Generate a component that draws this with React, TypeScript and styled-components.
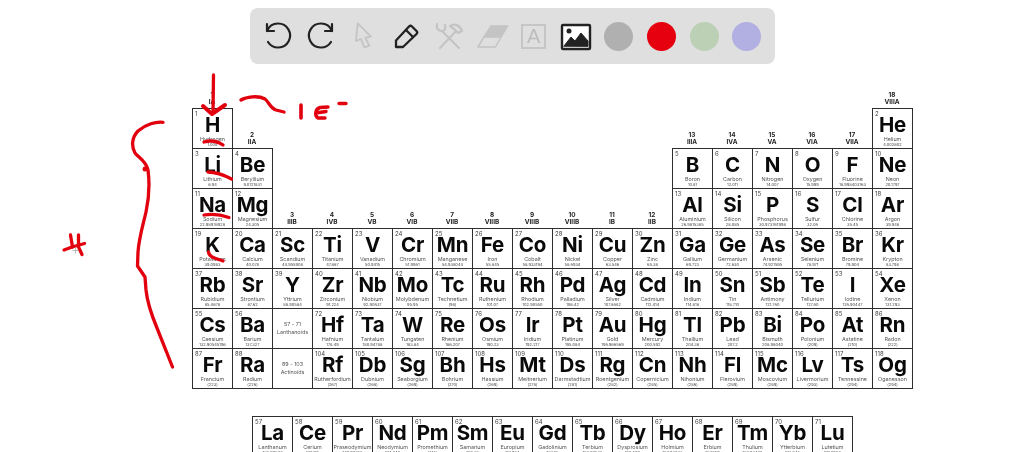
import React from "react";
import styled, { createGlobalStyle } from "styled-components";

const Global = createGlobalStyle`
  html, body { margin: 0; padding: 0; background: #fff; overflow: hidden; }
  body { font-family: Inter, "Liberation Sans", sans-serif; }
`;

const Page = styled.div`
  position: relative;
  width: 1024px;
  height: 452px;
  overflow: hidden;
  padding-top: 8px;
  box-sizing: border-box;
  background: #fff;
  filter: blur(0.35px);
`;

const Toolbar = styled.div`
  display: flex;
  align-items: center;
  width: 525px;
  height: 56px;
  margin-left: 250px;
  padding: 0 7px;
  box-sizing: border-box;
  background: #dfdfdf;
  border-radius: 8px;
`;

const Tool = styled.div`
  flex: 1;
  display: flex;
  align-items: center;
  justify-content: center;
`;

const Icon = styled.svg`
  width: 32px;
  height: 32px;
  overflow: visible;
  fill: none;
  stroke-linecap: round;
  stroke-linejoin: round;
`;

const TextTool = styled.div`
  width: 25px;
  height: 25px;
  box-sizing: border-box;
  display: flex;
  align-items: center;
  justify-content: center;
  border: 2px solid #c6c6c6;
  color: #bdbdbd;
  font-family: "Liberation Sans", sans-serif;
  font-size: 20px;
  line-height: 1;
`;

const Swatch = styled.div<{ $color: string }>`
  width: 29px;
  height: 29px;
  border-radius: 50%;
  background: ${(p) => p.$color};
`;

const Table = styled.div`
  display: grid;
  grid-template-columns: repeat(18, 40px);
  grid-template-rows: 20px repeat(7, 40px);
  margin: 24px 0 0 192px;
  width: 720px;
`;

const Series = styled.div`
  display: grid;
  grid-template-columns: repeat(15, 40px);
  grid-template-rows: 40px;
  margin: 28px 0 0 252px;
  width: 600px;
`;

const Cell = styled.div<{ $col: number; $row: number }>`
  grid-column: ${(p) => p.$col};
  grid-row: ${(p) => p.$row};
  width: 41px;
  height: 41px;
  margin: 0 -1px -1px 0;
  box-sizing: border-box;
  border: 1px solid #2e2e2e;
  padding-top: 1px;
  display: flex;
  flex-direction: column;
  align-items: center;
  background: #fff;
  overflow: hidden;
`;

const Num = styled.div`
  align-self: flex-start;
  height: 5px;
  padding-left: 2px;
  font-size: 6px;
  line-height: 7px;
  color: #444;
`;

const Symbol = styled.div`
  height: 20px;
  font-size: 20.5px;
  font-weight: 700;
  letter-spacing: -0.2px;
  line-height: 20px;
  color: #0a0a0a;
`;

const Name = styled.div`
  margin-top: 1px;
  height: 6px;
  font-size: 5.4px;
  line-height: 6px;
  color: #555;
  white-space: nowrap;
`;

const Mass = styled.div`
  height: 5px;
  font-size: 4px;
  line-height: 5px;
  color: #444;
  white-space: nowrap;
`;

const Range = styled.div`
  margin-top: 11px;
  font-size: 5.4px;
  line-height: 7.5px;
  color: #555;
  text-align: center;
`;

const GroupLabel = styled.div<{ $col: number; $row: number }>`
  grid-column: ${(p) => p.$col};
  grid-row: ${(p) => p.$row};
  align-self: end;
  padding-bottom: 2px;
  text-align: center;
  font-size: 6.4px;
  font-weight: 700;
  line-height: 7px;
  color: #222;
`;

const Ink = styled.svg`
  position: absolute;
  left: 0;
  top: 0;
  width: 1024px;
  height: 452px;
  fill: none;
  stroke: #e2000f;
  stroke-width: 3.3;
  stroke-linecap: round;
  stroke-linejoin: round;
  pointer-events: none;
`;

type El = [number, string, string, string, number, number];

const raw = `1 H Hydrogen 1.008 1 1|2 He Helium 4.002602 18 1|3 Li Lithium 6.94 1 2|4 Be Beryllium 9.0121831 2 2|5 B Boron 10.81 13 2|6 C Carbon 12.011 14 2|7 N Nitrogen 14.007 15 2|8 O Oxygen 15.999 16 2|9 F Fluorine 18.998403163 17 2|10 Ne Neon 20.1797 18 2|11 Na Sodium 22.98976928 1 3|12 Mg Magnesium 24.305 2 3|13 Al Aluminium 26.9815385 13 3|14 Si Silicon 28.085 14 3|15 P Phosphorus 30.973761998 15 3|16 S Sulfur 32.06 16 3|17 Cl Chlorine 35.45 17 3|18 Ar Argon 39.948 18 3|19 K Potassium 39.0983 1 4|20 Ca Calcium 40.078 2 4|21 Sc Scandium 44.955908 3 4|22 Ti Titanium 47.867 4 4|23 V Vanadium 50.9415 5 4|24 Cr Chromium 51.9961 6 4|25 Mn Manganese 54.938044 7 4|26 Fe Iron 55.845 8 4|27 Co Cobalt 58.933194 9 4|28 Ni Nickel 58.6934 10 4|29 Cu Copper 63.546 11 4|30 Zn Zinc 65.38 12 4|31 Ga Gallium 69.723 13 4|32 Ge Germanium 72.630 14 4|33 As Arsenic 74.921595 15 4|34 Se Selenium 78.971 16 4|35 Br Bromine 79.904 17 4|36 Kr Krypton 83.798 18 4|37 Rb Rubidium 85.4678 1 5|38 Sr Strontium 87.62 2 5|39 Y Yttrium 88.90584 3 5|40 Zr Zirconium 91.224 4 5|41 Nb Niobium 92.90637 5 5|42 Mo Molybdenum 95.95 6 5|43 Tc Technetium (98) 7 5|44 Ru Ruthenium 101.07 8 5|45 Rh Rhodium 102.90550 9 5|46 Pd Palladium 106.42 10 5|47 Ag Silver 107.8682 11 5|48 Cd Cadmium 112.414 12 5|49 In Indium 114.818 13 5|50 Sn Tin 118.710 14 5|51 Sb Antimony 121.760 15 5|52 Te Tellurium 127.60 16 5|53 I Iodine 126.90447 17 5|54 Xe Xenon 131.293 18 5|55 Cs Caesium 132.90545196 1 6|56 Ba Barium 137.327 2 6|72 Hf Hafnium 178.49 4 6|73 Ta Tantalum 180.94788 5 6|74 W Tungsten 183.84 6 6|75 Re Rhenium 186.207 7 6|76 Os Osmium 190.23 8 6|77 Ir Iridium 192.217 9 6|78 Pt Platinum 195.084 10 6|79 Au Gold 196.966569 11 6|80 Hg Mercury 200.592 12 6|81 Tl Thallium 204.38 13 6|82 Pb Lead 207.2 14 6|83 Bi Bismuth 208.98040 15 6|84 Po Polonium (209) 16 6|85 At Astatine (210) 17 6|86 Rn Radon (222) 18 6|87 Fr Francium (223) 1 7|88 Ra Radium (226) 2 7|104 Rf Rutherfordium (267) 4 7|105 Db Dubnium (268) 5 7|106 Sg Seaborgium (269) 6 7|107 Bh Bohrium (270) 7 7|108 Hs Hassium (269) 8 7|109 Mt Meitnerium (278) 9 7|110 Ds Darmstadtium (281) 10 7|111 Rg Roentgenium (282) 11 7|112 Cn Copernicium (285) 12 7|113 Nh Nihonium (286) 13 7|114 Fl Flerovium (289) 14 7|115 Mc Moscovium (289) 15 7|116 Lv Livermorium (293) 16 7|117 Ts Tennessine (294) 17 7|118 Og Oganesson (294) 18 7`;

const elements: El[] = raw.split("|").map((s) => {
  const [n, sym, name, mass, col, per] = s.split(" ");
  return [Number(n), sym, name, mass, Number(col), Number(per)];
});

const lanthanides: [number, string, string, string][] = [
  [57, "La", "Lanthanum", "138.90547"],
  [58, "Ce", "Cerium", "140.116"],
  [59, "Pr", "Praseodymium", "140.90766"],
  [60, "Nd", "Neodymium", "144.242"],
  [61, "Pm", "Promethium", "(145)"],
  [62, "Sm", "Samarium", "150.36"],
  [63, "Eu", "Europium", "151.964"],
  [64, "Gd", "Gadolinium", "157.25"],
  [65, "Tb", "Terbium", "158.92535"],
  [66, "Dy", "Dysprosium", "162.500"],
  [67, "Ho", "Holmium", "164.93033"],
  [68, "Er", "Erbium", "167.259"],
  [69, "Tm", "Thulium", "168.93422"],
  [70, "Yb", "Ytterbium", "173.045"],
  [71, "Lu", "Lutetium", "174.9668"],
];

const groups: [number, string, number][] = [
  [1, "IA", 1], [2, "IIA", 2], [3, "IIIB", 4], [4, "IVB", 4], [5, "VB", 4], [6, "VIB", 4],
  [7, "VIIB", 4], [8, "VIIIB", 4], [9, "VIIIB", 4], [10, "VIIIB", 4], [11, "IB", 4], [12, "IIB", 4],
  [13, "IIIA", 2], [14, "IVA", 2], [15, "VA", 2], [16, "VIA", 2], [17, "VIIA", 2], [18, "VIIIA", 1],
];

const Element = ({ n, sym, name, mass, col, row }: { n: number; sym: string; name: string; mass: string; col: number; row: number }) => (
  <Cell $col={col} $row={row}>
    <Num>{n}</Num>
    <Symbol>{sym}</Symbol>
    <Name>{name}</Name>
    <Mass>{mass}</Mass>
  </Cell>
);

const dark = "#222";
const faint = "#c4c4c4";

export default function App() {
  return (
    <Page>
      <Global />
      <Toolbar>
        <Tool>
          <Icon viewBox="0 0 32 32" stroke={dark} strokeWidth="2.2">
            <path d="M5 11C7 6 11 3.5 16 3.5A12 12 0 1 1 6 22" />
            <path d="M5 4V11H12" />
          </Icon>
        </Tool>
        <Tool>
          <Icon viewBox="0 0 32 32" stroke={dark} strokeWidth="2.2">
            <path d="M27 11C25 6 21 3.5 16 3.5A12 12 0 1 0 26 22" />
            <path d="M27 4V11H20" />
          </Icon>
        </Tool>
        <Tool>
          <Icon viewBox="0 0 32 32" stroke={faint} strokeWidth="1.8">
            <path d="M10.7 3.3L24 16.7L18.3 17.7L22.3 25.7L17.3 27.3L14 19L9 21Z" />
          </Icon>
        </Tool>
        <Tool>
          <Icon viewBox="0 0 32 32" stroke={dark} strokeWidth="2.3">
            <path d="M6 27V20.5L19 6.5Q20.5 5 22 6.5L26.5 11Q28 12.5 26.5 14L13 27Z" />
            <path d="M16 10L23 17" />
          </Icon>
        </Tool>
        <Tool>
          <Icon viewBox="0 0 32 32" stroke={faint} strokeWidth="2.2">
            <path d="M9 11L26 28" />
            <path d="M23 11L7 28" />
            <path d="M4 4C3 8 5 11 9 11C12 11 13 8 12 5" />
            <path d="M17 6C21 3 27 5 29 11L25 13L21 9Z" />
          </Icon>
        </Tool>
        <Tool>
          <Icon viewBox="0 0 32 32" stroke={faint} strokeWidth="1.5">
            <path d="M16 6H32.5L26 17H9Z" fill={faint} />
            <path d="M9 17L3 27H20.5L26 17" />
          </Icon>
        </Tool>
        <Tool>
          <TextTool>A</TextTool>
        </Tool>
        <Tool>
          <Icon viewBox="0 0 32 32" stroke={dark} strokeWidth="2.4">
            <rect x="2" y="5" width="28" height="24" rx="1" fill="#fff" />
            <circle cx="9" cy="11" r="2.5" fill={dark} stroke="none" />
            <path d="M4 26L11 17L15 21L21 13L28 21V26Z" fill={dark} stroke={dark} strokeWidth="1" />
          </Icon>
        </Tool>
        <Tool><Swatch $color="#b0b0b0" /></Tool>
        <Tool><Swatch $color="#e6000f" /></Tool>
        <Tool><Swatch $color="#bcd0b6" /></Tool>
        <Tool><Swatch $color="#b2afe2" /></Tool>
      </Toolbar>

      <Table>
        {groups.map(([g, roman, row]) => (
          <GroupLabel key={g} $col={g} $row={row}>
            {g}
            <br />
            {roman}
          </GroupLabel>
        ))}
        {elements.map(([n, sym, name, mass, col, per]) => (
          <Element key={n} n={n} sym={sym} name={name} mass={mass} col={col} row={per + 1} />
        ))}
        <Cell $col={3} $row={7}>
          <Range>57 - 71<br />Lanthanoids</Range>
        </Cell>
        <Cell $col={3} $row={8}>
          <Range>89 - 103<br />Actinoids</Range>
        </Cell>
      </Table>

      <Series>
        {lanthanides.map(([n, sym, name, mass], i) => (
          <Element key={n} n={n} sym={sym} name={name} mass={mass} col={i + 1} row={1} />
        ))}
      </Series>

      <Ink viewBox="0 0 1024 452">
        <path d="M213.5 75L213 113" />
        <path d="M203 106L212 114L225 105" strokeWidth="4" />
        <path d="M241 100C246 97 258 95 265 99C269 102 270 108 276 110L284 112" />
        <path d="M301 105L301 118" strokeWidth="3.6" />
        <path d="M328 107L320 107.5C315 109 314.5 116 318 118L325 118M316 113L326 111.5" strokeWidth="3.4" />
        <path d="M339 103.5L346 103.5" />
        <path d="M204 142C210 140 218 141 223 145" />
        <path d="M208 172C215 172 224 175 231.5 179" />
        <path d="M204 215C212 213.5 222 215 229 217.5" />
        <path d="M208.5 252C209 257 215 258 223 261" />
        <path d="M163 122.3C156 121.5 146 124 138 131C132 137 131 146 135 153C139 158 146 161 148 170C150 185 149 198 146 212C143 225 139 238 138 252L137.5 266L145 277L146 290C147 300 152 316 157 328L172.5 367" />
        <circle cx="145" cy="169" r="2.5" fill="#e2000f" stroke="none" />
        <path d="M70.5 235L72.5 247" />
        <path d="M78.5 235L78.5 247L82 254.5" />
        <path d="M64 250L72 247L84.5 243.5" />
        <path d="M75.5 248V253M73 250.5H78" stroke="#aaa" strokeWidth="0.8" />
      </Ink>
    </Page>
  );
}
